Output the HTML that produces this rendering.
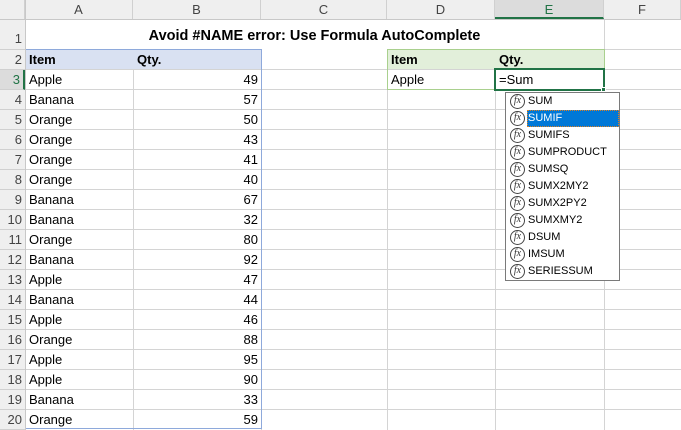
<!DOCTYPE html>
<html><head><meta charset="utf-8"><style>
*{margin:0;padding:0;box-sizing:border-box}
body{width:681px;height:430px;overflow:hidden;background:#fff;font-family:"Liberation Sans",Arial,sans-serif;font-size:13px;color:#000;position:relative}
.a{position:absolute}
.hl{position:absolute;background:#d4d4d4}
.ch{position:absolute;top:0;height:19px;background:#efefef;color:#444;font-size:13px;text-align:center;line-height:19px;border-right:1px solid #d0d0d0}
.rh{position:absolute;left:0;width:25px;background:#efefef;color:#444;text-align:right;padding-right:3px;font-size:13px;border-bottom:1px solid #d0d0d0}
.t{position:absolute;line-height:20px;white-space:nowrap}
.dd div.i{position:absolute;left:0;height:17px;line-height:17px;font-size:11px;color:#000;width:112px}
.ic{position:absolute;left:4px;top:1px;width:15px;height:15px;border:1.3px solid #444;border-radius:50%;font-family:"Liberation Serif",serif;font-style:italic;font-size:10px;line-height:12px;text-align:center;color:#333;background:#fff}
.nm{position:absolute;left:22px;top:0}
</style></head><body>
<div class="hl" style="left:133px;top:19px;width:1px;height:411px"></div>
<div class="hl" style="left:261px;top:19px;width:1px;height:411px"></div>
<div class="hl" style="left:387px;top:19px;width:1px;height:411px"></div>
<div class="hl" style="left:495px;top:19px;width:1px;height:411px"></div>
<div class="hl" style="left:604px;top:19px;width:1px;height:411px"></div>
<div class="hl" style="left:604px;top:49px;width:77px;height:1px"></div>
<div class="hl" style="left:25px;top:69px;width:656px;height:1px"></div>
<div class="hl" style="left:25px;top:89px;width:656px;height:1px"></div>
<div class="hl" style="left:25px;top:109px;width:656px;height:1px"></div>
<div class="hl" style="left:25px;top:129px;width:656px;height:1px"></div>
<div class="hl" style="left:25px;top:149px;width:656px;height:1px"></div>
<div class="hl" style="left:25px;top:169px;width:656px;height:1px"></div>
<div class="hl" style="left:25px;top:189px;width:656px;height:1px"></div>
<div class="hl" style="left:25px;top:209px;width:656px;height:1px"></div>
<div class="hl" style="left:25px;top:229px;width:656px;height:1px"></div>
<div class="hl" style="left:25px;top:249px;width:656px;height:1px"></div>
<div class="hl" style="left:25px;top:269px;width:656px;height:1px"></div>
<div class="hl" style="left:25px;top:289px;width:656px;height:1px"></div>
<div class="hl" style="left:25px;top:309px;width:656px;height:1px"></div>
<div class="hl" style="left:25px;top:329px;width:656px;height:1px"></div>
<div class="hl" style="left:25px;top:349px;width:656px;height:1px"></div>
<div class="hl" style="left:25px;top:369px;width:656px;height:1px"></div>
<div class="hl" style="left:25px;top:389px;width:656px;height:1px"></div>
<div class="hl" style="left:25px;top:409px;width:656px;height:1px"></div>
<div class="a" style="left:25px;top:19px;width:579px;height:30px;background:#fff"></div>
<div class="a" style="left:25px;top:50px;width:236px;height:19px;background:#d9e1f2"></div>
<div class="a" style="left:25px;top:49px;width:237px;height:380px;border:1px solid #8ea9db"></div>
<div class="a" style="left:387px;top:50px;width:217px;height:19px;background:#e2efda"></div>
<div class="a" style="left:387px;top:49px;width:218px;height:41px;border:1px solid #a9d08e"></div>
<div class="a" style="left:0;top:0;width:25px;height:19px;background:#efefef;border-right:1px solid #d0d0d0"></div>
<div class="ch" style="left:25px;width:108px">A</div>
<div class="ch" style="left:133px;width:128px">B</div>
<div class="ch" style="left:261px;width:126px">C</div>
<div class="ch" style="left:387px;width:108px">D</div>
<div class="ch" style="left:495px;width:109px;background:#dcdcdc;color:#217346;border-bottom:2px solid #217346">E</div>
<div class="ch" style="left:604px;width:77px">F</div>
<div class="a" style="left:0;top:19px;width:681px;height:1px;background:#c8c8c8"></div>
<div class="rh" style="top:20px;height:30px;line-height:38px">1</div>
<div class="rh" style="top:50px;height:20px;line-height:20px">2</div>
<div class="rh" style="top:70px;height:20px;line-height:20px;background:#dcdcdc;color:#217346;border-right:2px solid #217346">3</div>
<div class="rh" style="top:90px;height:20px;line-height:20px">4</div>
<div class="rh" style="top:110px;height:20px;line-height:20px">5</div>
<div class="rh" style="top:130px;height:20px;line-height:20px">6</div>
<div class="rh" style="top:150px;height:20px;line-height:20px">7</div>
<div class="rh" style="top:170px;height:20px;line-height:20px">8</div>
<div class="rh" style="top:190px;height:20px;line-height:20px">9</div>
<div class="rh" style="top:210px;height:20px;line-height:20px">10</div>
<div class="rh" style="top:230px;height:20px;line-height:20px">11</div>
<div class="rh" style="top:250px;height:20px;line-height:20px">12</div>
<div class="rh" style="top:270px;height:20px;line-height:20px">13</div>
<div class="rh" style="top:290px;height:20px;line-height:20px">14</div>
<div class="rh" style="top:310px;height:20px;line-height:20px">15</div>
<div class="rh" style="top:330px;height:20px;line-height:20px">16</div>
<div class="rh" style="top:350px;height:20px;line-height:20px">17</div>
<div class="rh" style="top:370px;height:20px;line-height:20px">18</div>
<div class="rh" style="top:390px;height:20px;line-height:20px">19</div>
<div class="rh" style="top:410px;height:20px;line-height:20px">20</div>
<div class="a" style="left:25px;top:0;width:1px;height:430px;background:#c8c8c8"></div>
<div class="t" style="left:25px;width:579px;top:26px;text-align:center;font-weight:bold;font-size:14.5px">Avoid #NAME error: Use Formula AutoComplete</div>
<div class="t" style="left:29px;top:50px;font-weight:bold">Item</div>
<div class="t" style="left:137px;top:50px;font-weight:bold">Qty.</div>
<div class="t" style="left:391px;top:50px;font-weight:bold">Item</div>
<div class="t" style="left:499px;top:50px;font-weight:bold">Qty.</div>
<div class="t" style="left:391px;top:70px">Apple</div>
<div class="a" style="left:494px;top:68px;width:111px;height:23px;border:2px solid #217346"></div>
<div class="a" style="left:601px;top:87px;width:5px;height:5px;background:#217346;border:1px solid #fff"></div>
<div class="t" style="left:499px;top:70px">=Sum</div>
<div class="t" style="left:29px;top:70px">Apple</div><div class="t" style="left:133px;width:125px;text-align:right;top:70px">49</div>
<div class="t" style="left:29px;top:90px">Banana</div><div class="t" style="left:133px;width:125px;text-align:right;top:90px">57</div>
<div class="t" style="left:29px;top:110px">Orange</div><div class="t" style="left:133px;width:125px;text-align:right;top:110px">50</div>
<div class="t" style="left:29px;top:130px">Orange</div><div class="t" style="left:133px;width:125px;text-align:right;top:130px">43</div>
<div class="t" style="left:29px;top:150px">Orange</div><div class="t" style="left:133px;width:125px;text-align:right;top:150px">41</div>
<div class="t" style="left:29px;top:170px">Orange</div><div class="t" style="left:133px;width:125px;text-align:right;top:170px">40</div>
<div class="t" style="left:29px;top:190px">Banana</div><div class="t" style="left:133px;width:125px;text-align:right;top:190px">67</div>
<div class="t" style="left:29px;top:210px">Banana</div><div class="t" style="left:133px;width:125px;text-align:right;top:210px">32</div>
<div class="t" style="left:29px;top:230px">Orange</div><div class="t" style="left:133px;width:125px;text-align:right;top:230px">80</div>
<div class="t" style="left:29px;top:250px">Banana</div><div class="t" style="left:133px;width:125px;text-align:right;top:250px">92</div>
<div class="t" style="left:29px;top:270px">Apple</div><div class="t" style="left:133px;width:125px;text-align:right;top:270px">47</div>
<div class="t" style="left:29px;top:290px">Banana</div><div class="t" style="left:133px;width:125px;text-align:right;top:290px">44</div>
<div class="t" style="left:29px;top:310px">Apple</div><div class="t" style="left:133px;width:125px;text-align:right;top:310px">46</div>
<div class="t" style="left:29px;top:330px">Orange</div><div class="t" style="left:133px;width:125px;text-align:right;top:330px">88</div>
<div class="t" style="left:29px;top:350px">Apple</div><div class="t" style="left:133px;width:125px;text-align:right;top:350px">95</div>
<div class="t" style="left:29px;top:370px">Apple</div><div class="t" style="left:133px;width:125px;text-align:right;top:370px">90</div>
<div class="t" style="left:29px;top:390px">Banana</div><div class="t" style="left:133px;width:125px;text-align:right;top:390px">33</div>
<div class="t" style="left:29px;top:410px">Orange</div><div class="t" style="left:133px;width:125px;text-align:right;top:410px">59</div>
<div class="a dd" style="left:505px;top:92px;width:115px;height:189px;background:#fff;border:1px solid #7a7a7a;overflow:hidden">
<div class="i" style="top:0"><span class="ic">fx</span><span class="nm">SUM</span></div>
<div class="i" style="top:17px"><span class="ic">fx</span><span class="a" style="left:21px;top:0;width:92px;height:17px;background:#0078d7;border:1px dotted #e08020"></span><span class="nm" style="color:#fff">SUMIF</span></div>
<div class="i" style="top:34px"><span class="ic">fx</span><span class="nm">SUMIFS</span></div>
<div class="i" style="top:51px"><span class="ic">fx</span><span class="nm">SUMPRODUCT</span></div>
<div class="i" style="top:68px"><span class="ic">fx</span><span class="nm">SUMSQ</span></div>
<div class="i" style="top:85px"><span class="ic">fx</span><span class="nm">SUMX2MY2</span></div>
<div class="i" style="top:102px"><span class="ic">fx</span><span class="nm">SUMX2PY2</span></div>
<div class="i" style="top:119px"><span class="ic">fx</span><span class="nm">SUMXMY2</span></div>
<div class="i" style="top:136px"><span class="ic">fx</span><span class="nm">DSUM</span></div>
<div class="i" style="top:153px"><span class="ic">fx</span><span class="nm">IMSUM</span></div>
<div class="i" style="top:170px"><span class="ic">fx</span><span class="nm">SERIESSUM</span></div>
</div>
</body></html>
